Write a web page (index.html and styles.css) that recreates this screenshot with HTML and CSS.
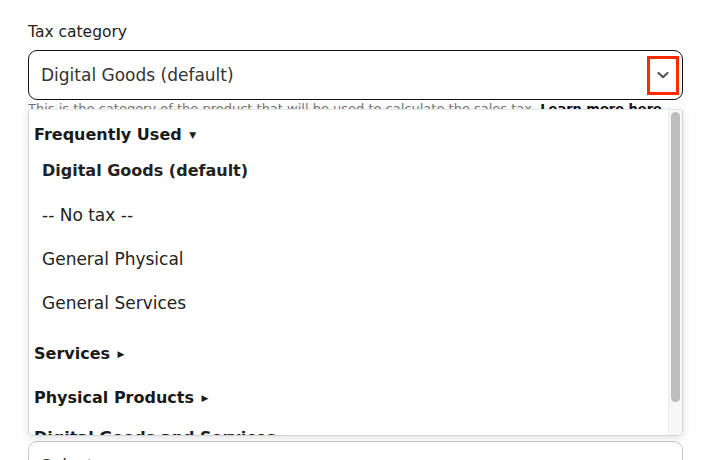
FILE: index.html
```html
<!DOCTYPE html>
<html>
<head>
<meta charset="utf-8">
<link rel="stylesheet" href="styles.css">
</head>
<body>
<div class="form">
  <div class="field">
    <label class="label">Tax category</label>
    <div class="select">
      <span class="value">Digital Goods (default)</span>
      <span class="chev-box">
        <svg width="14" height="10" viewBox="0 0 14 10"><path d="M2.5 3 L7 7.2 L11.5 3" fill="none" stroke="#555" stroke-width="2.2" stroke-linecap="round" stroke-linejoin="round"/></svg>
      </span>
    </div>
    <p class="help">This is the category of the product that will be used to calculate the sales tax. <b>Learn more here</b></p>
    <div class="menu">
      <div class="list">
        <div class="group-head first">Frequently Used <span class="tri">▼</span></div>
        <div class="opt sel">Digital Goods (default)</div>
        <div class="opt">-- No tax --</div>
        <div class="opt">General Physical</div>
        <div class="opt">General Services</div>
        <div class="group-head">Services <span class="tri">▶</span></div>
        <div class="group-head">Physical Products <span class="tri">▶</span></div>
        <div class="group-head last">Digital Goods and Services <span class="tri">▶</span></div>
      </div>
      <div class="track"><div class="thumb"></div></div>
    </div>
  </div>
  <div class="select second"><span class="value">Select...</span></div>
</div>
</body>
</html>
```
FILE: styles.css
```css
html, body { margin: 0; padding: 0; background: #fff; }
html { overflow: hidden; }
body {
  font-family: "DejaVu Sans", "Noto Sans", sans-serif;
  color: #1a1a1a;
  width: 715px;
  height: 460px;
  overflow: hidden;
}
.form { padding: 22px 32px 0 28px; height: 460px; box-sizing: border-box; overflow: hidden; }
.field { position: relative; }
.label {
  display: block;
  font-size: 15.5px;
  font-weight: 500;
  line-height: 20px;
  margin-bottom: 8px;
  color: #222;
}
.select {
  height: 50px;
  border: 1.5px solid #111;
  border-radius: 9px;
  display: flex;
  align-items: center;
  padding: 0 3px 0 12px;
  box-sizing: border-box;
  justify-content: space-between;
}
.value { font-size: 17px; color: #333; }
.chev-box {
  width: 32px;
  height: 39px;
  box-sizing: border-box;
  border: 3.5px solid #ff2a00;
  display: flex;
  align-items: center;
  justify-content: center;
}
.help {
  margin: 0;
  font-size: 13px;
  color: #777;
  line-height: 18px;
  white-space: nowrap;
  overflow: hidden;
}
.help b { color: #111; }
.menu {
  position: absolute;
  left: 0;
  top: 87px;
  width: 655px;
  height: 327px;
  box-sizing: border-box;
  background: #fff;
  border: 1px solid #d4d4d4;
  border-top-color: #e8e8e8;
  border-radius: 2px 2px 5px 5px;
  box-shadow: 0 2px 10px rgba(0,0,0,0.12);
  display: flex;
  overflow: hidden;
}
.list { flex: 1; overflow: hidden; }
.group-head {
  font-weight: 700;
  font-size: 16px;
  height: 44px;
  line-height: 20px;
  padding: 19px 5px 0;
  box-sizing: border-box;
  color: #1a1a1a;
  white-space: nowrap;
}
.group-head.first { height: 39px; padding-top: 15px; }
.group-head.last { padding-top: 15px; }
.tri { font-size: 9px; vertical-align: 2px; margin-left: 2px; }
.opt {
  height: 44px;
  line-height: 44px;
  padding-left: 13px;
  font-size: 17px;
  color: #222;
}
.opt.sel { font-weight: 700; font-size: 16px; }
.track {
  width: 14px;
  background: #f7f7f7;
  border-left: 1px solid #ebebeb;
  padding: 2px 2px 0 2px;
  box-sizing: border-box;
}
.thumb {
  width: 9px;
  height: 290px;
  background: #bdbdbd;
  border-radius: 5px;
}
.second {
  margin-top: 323px;
  border: 1px solid #c8c8c8;
  border-radius: 9px;
  align-items: flex-start;
  padding-top: 14px;
}
```
